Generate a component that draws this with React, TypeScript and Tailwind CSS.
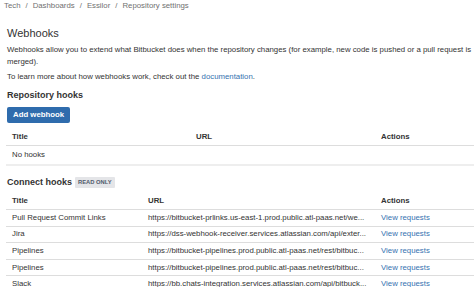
import React from "react";

const connectHooks = [
  {
    title: "Pull Request Commit Links",
    url: "https://bitbucket-prlinks.us-east-1.prod.public.atl-paas.net/we...",
  },
  {
    title: "Jira",
    url: "https://dss-webhook-receiver.services.atlassian.com/api/exter...",
  },
  {
    title: "Pipelines",
    url: "https://bitbucket-pipelines.prod.public.atl-paas.net/rest/bitbuc...",
  },
  {
    title: "Pipelines",
    url: "https://bitbucket-pipelines.prod.public.atl-paas.net/rest/bitbuc...",
  },
  {
    title: "Slack",
    url: "https://bb.chats-integration.services.atlassian.com/api/bitbuck...",
  },
];

export default function App() {
  return (
    <div className="w-[474px] h-[287px] overflow-hidden bg-white font-['Liberation_Sans',Arial,sans-serif] text-[7.8px] leading-[12px] text-[#333]">
      <div className="w-[540px] px-[7px]">
        {/* Breadcrumbs */}
        <div className="flex items-center gap-[5px] -ml-[3px] text-[#707070]">
          <span>Tech</span>
          <span>/</span>
          <span>Dashboards</span>
          <span>/</span>
          <span>Essilor</span>
          <span>/</span>
          <span>Repository settings</span>
        </div>

        <h1 className="mt-[14px] text-[11px] leading-[14px] text-[#333]">Webhooks</h1>
        <p className="mt-[4px] w-[480px]">
          Webhooks allow you to extend what Bitbucket does when the repository changes (for example, new code is
          pushed or a pull request is merged).
        </p>
        <p className="mt-[3px]">
          To learn more about how webhooks work, check out the{" "}
          <a href="#" className="text-[#3572b0]">
            documentation
          </a>
          .
        </p>

        {/* Repository hooks */}
        <h2 className="mt-[6px] text-[9px] font-bold">Repository hooks</h2>
        <button className="mt-[6px] h-[16px] rounded-[2px] bg-[#2f6cad] px-[6px] text-[7.8px] font-bold text-white">
          Add webhook
        </button>

        <div className="mt-[6px] -mx-px">
          <div className="grid h-[17px] grid-cols-[184px_185px_1fr] items-center border-b border-[#ddd] font-bold">
            <div className="px-[6px]">Title</div>
            <div className="px-[6px]">URL</div>
            <div className="px-[6px]">Actions</div>
          </div>
          <div className="flex h-[20px] items-center border-b-2 border-[#eee] px-[6px]">No hooks</div>
        </div>

        {/* Connect hooks */}
        <div className="mt-[10px] flex items-center">
          <h2 className="text-[9px] font-bold">Connect hooks</h2>
          <span className="ml-[3px] rounded-[1px] bg-[#e4e5e8] px-[3px] text-[5.8px] font-bold leading-[11px] text-[#505a6b]">
            READ ONLY
          </span>
        </div>

        <div className="mt-[5px] -mx-px">
          <div className="grid h-[17px] grid-cols-[136px_233px_1fr] items-center border-b border-[#ddd] font-bold">
            <div className="px-[6px]">Title</div>
            <div className="px-[6px]">URL</div>
            <div className="px-[6px]">Actions</div>
          </div>
          {connectHooks.map((hook, i) => (
            <div
              key={i}
              className="grid h-[16.6px] grid-cols-[136px_233px_1fr] items-center border-b border-[#ddd]"
            >
              <div className="px-[6px] whitespace-nowrap">{hook.title}</div>
              <div className="px-[6px] whitespace-nowrap">{hook.url}</div>
              <div className="px-[6px] whitespace-nowrap">
                <a href="#" className="text-[#3572b0]">
                  View requests
                </a>
              </div>
            </div>
          ))}
        </div>
      </div>
    </div>
  );
}
